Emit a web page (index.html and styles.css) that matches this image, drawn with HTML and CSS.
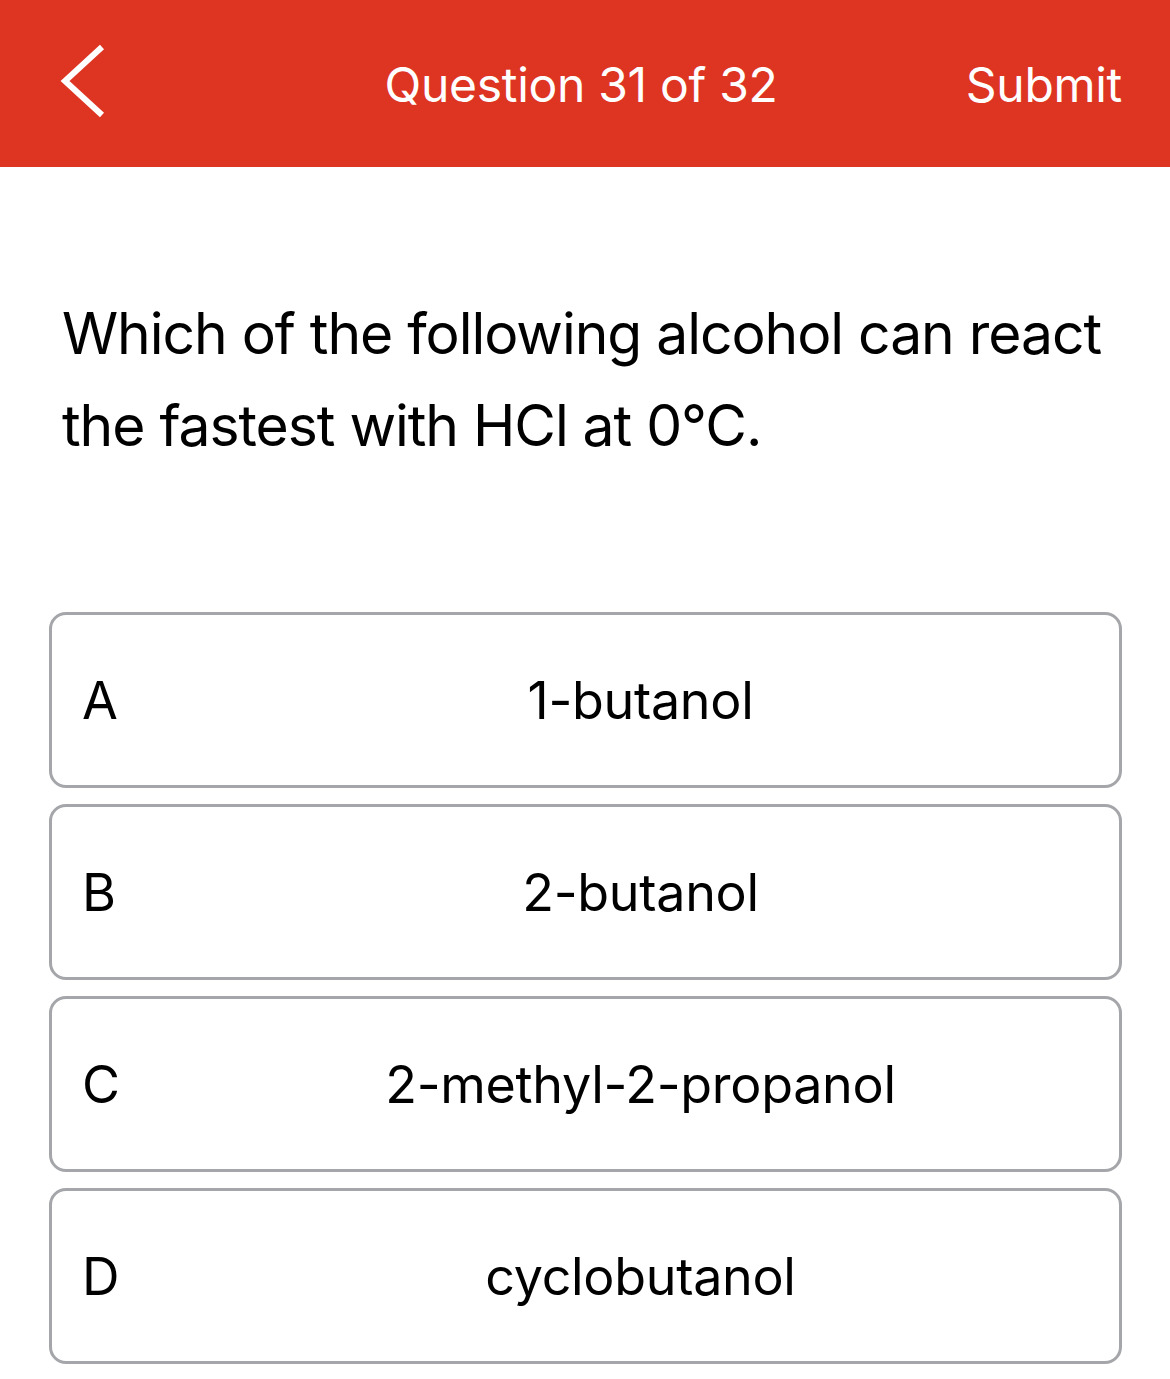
FILE: index.html
```html
<!DOCTYPE html>
<html>
<head>
<meta charset="utf-8">
<link rel="stylesheet" href="styles.css">
</head>
<body>
<header class="topbar">
  <div class="left">
    <button class="back" aria-label="Back">
      <svg width="46" height="76" viewBox="0 0 46 76"><path d="M42 4 L5 38 L42 72" fill="none" stroke="#fff" stroke-width="6" stroke-linecap="butt" stroke-linejoin="miter"/></svg>
    </button>
  </div>
  <div class="title">Question 31 of 32</div>
  <div class="right"><span class="submit">Submit</span></div>
</header>
<main class="content">
  <p class="question">Which of the following alcohol can react the fastest with HCl at 0°C.</p>
  <div class="options">
    <div class="option"><span class="label">A</span><span class="text">1-butanol</span></div>
    <div class="option"><span class="label">B</span><span class="text">2-butanol</span></div>
    <div class="option"><span class="label">C</span><span class="text">2-methyl-2-propanol</span></div>
    <div class="option"><span class="label">D</span><span class="text">cyclobutanol</span></div>
  </div>
</main>
</body>
</html>
```
FILE: styles.css
```css
html, body {
  margin: 0;
  padding: 0;
  background: #fff;
}
body {
  font-family: Inter, "Noto Sans", "Liberation Sans", sans-serif;
  color: #000;
}
.topbar {
  height: 167px;
  background: #de3523;
  display: grid;
  grid-template-columns: 1fr auto 1fr;
  align-items: center;
  color: #fff;
}
.left {
  display: flex;
  align-items: center;
}
.back {
  background: none;
  border: 0;
  padding: 0;
  margin-left: 60px;
  margin-top: -6px;
  width: 46px;
  height: 76px;
  display: flex;
  align-items: center;
}
.title {
  font-size: 48px;
  margin-top: 2px;
  margin-right: 8px;
  letter-spacing: -0.3px;
}
.right {
  display: flex;
  justify-content: flex-end;
}
.submit {
  font-size: 48px;
  margin-right: 48px;
  margin-top: 2px;
  letter-spacing: -0.3px;
}
.content {
  padding: 0 40px 0 49px;
}
.question {
  margin: 121px 0 0 13px;
  font-size: 57px;
  line-height: 92px;
  letter-spacing: -1.05px;
}
.options {
  margin-top: 140px;
  display: flex;
  flex-direction: column;
  gap: 16px;
  margin-right: 8px;
}
.option {
  height: 176px;
  box-sizing: border-box;
  border: 3px solid #a4a6a9;
  border-radius: 17px;
  display: flex;
  align-items: center;
  padding: 0 34px 0 30px;
  font-size: 52px;
}
.label {
  width: 114px;
}
.text {
  flex: 1;
  text-align: center;
  letter-spacing: -0.3px;
}
```
